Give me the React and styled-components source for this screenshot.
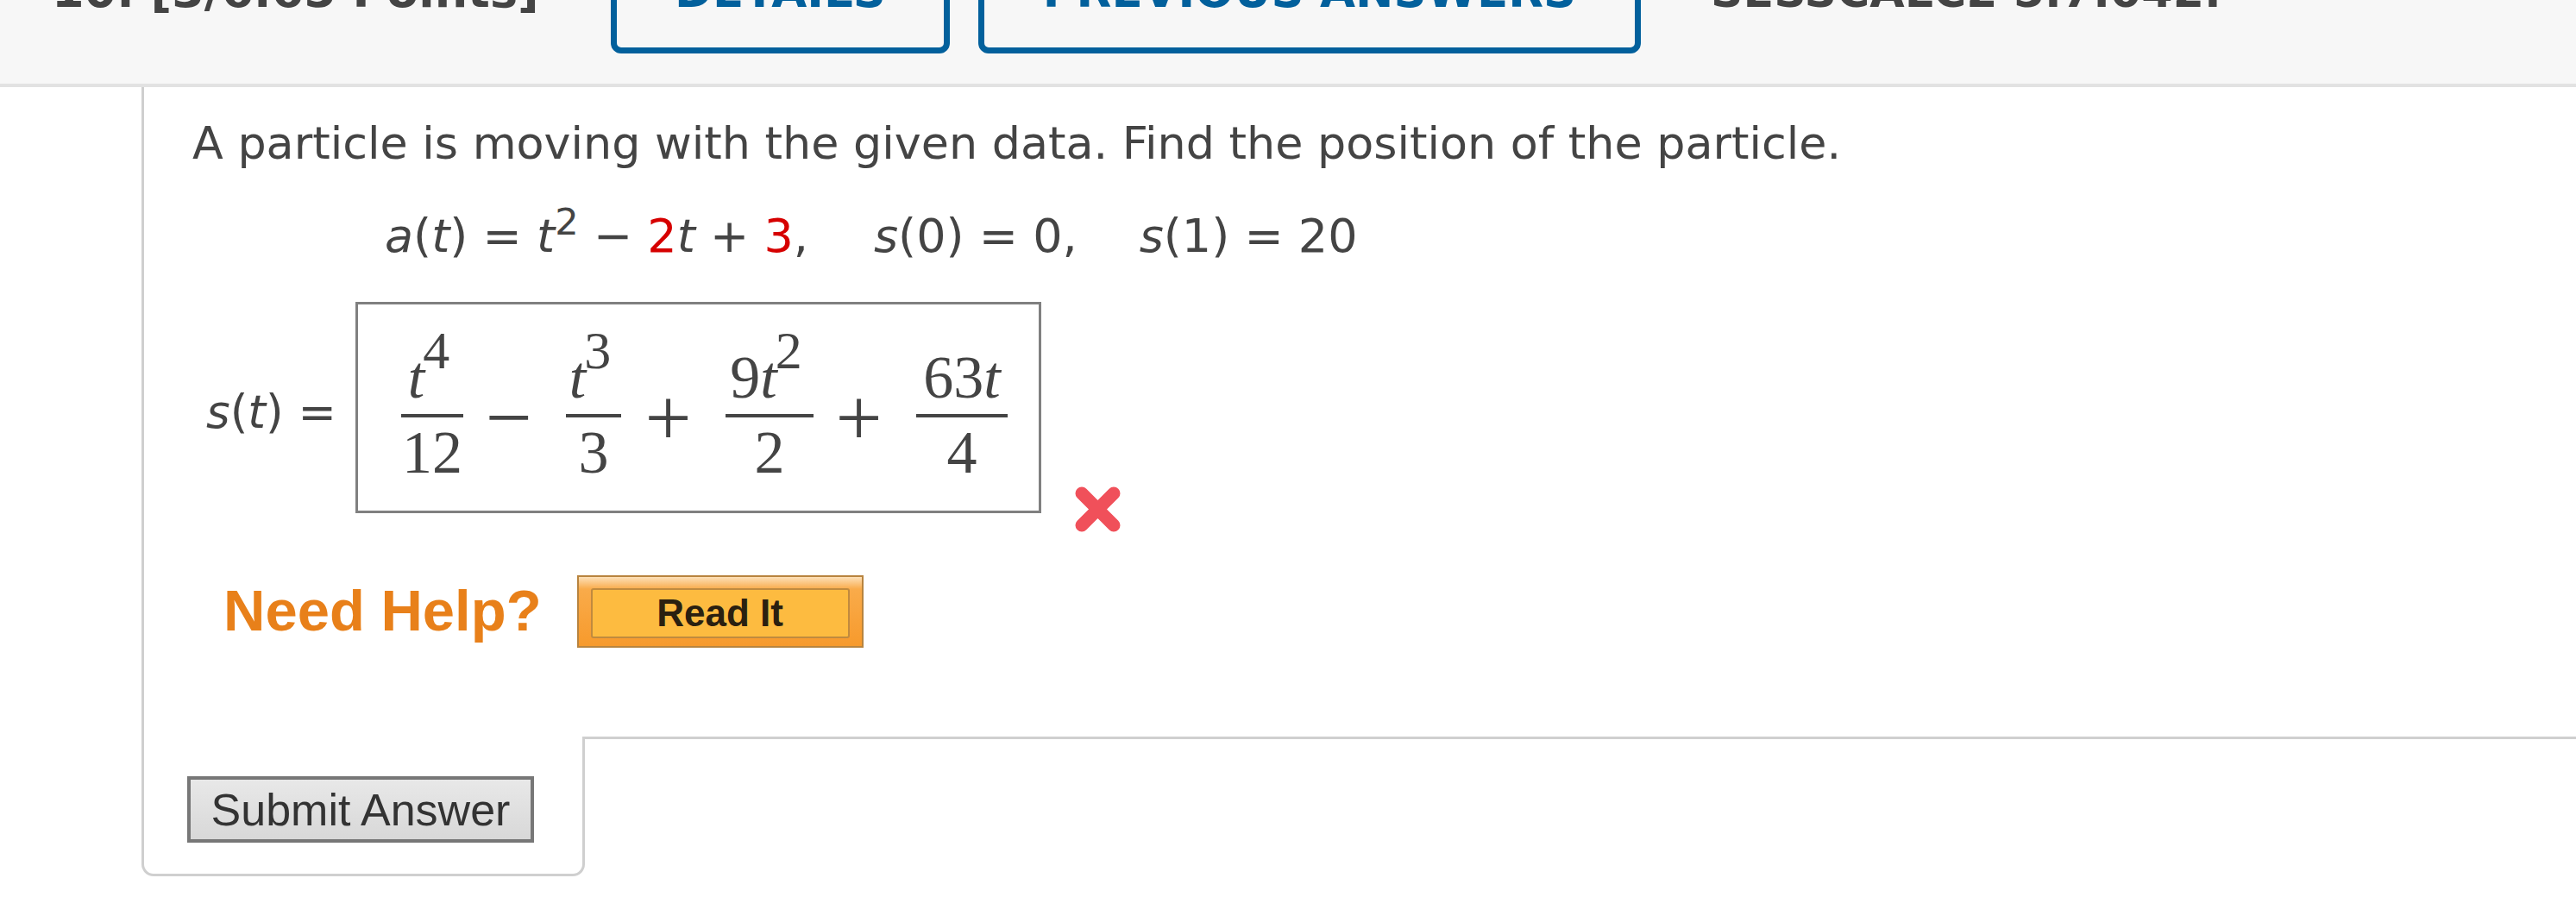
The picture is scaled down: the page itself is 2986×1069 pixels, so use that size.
import React from 'react';
import styled, { createGlobalStyle } from 'styled-components';

const GlobalStyle = createGlobalStyle`
  html, body {
    margin: 0;
    padding: 0;
    background: #fff;
  }
`;

const Page = styled.div`
  width: 2986px;
  height: 1069px;
  overflow: hidden;
  background: #fff;
  color: #444;
  font-family: "DejaVu Sans", sans-serif;
`;

const Header = styled.header`
  height: 97px;
  display: flex;
  align-items: flex-end;
  padding: 0 0 0 60px;
  background: #f7f7f7;
  border-bottom: 4px solid #e2e2e2;
  overflow: hidden;
`;

const HeaderRow = styled.div`
  display: flex;
  align-items: flex-end;
  margin-bottom: 35px;
`;

const Points = styled.span`
  width: ${({ $width }) => $width}px;
  font-weight: bold;
  font-size: ${({ $size }) => $size}px;
  line-height: 60px;
  color: #444;
  white-space: nowrap;
  margin-bottom: 42px;
`;

const Tab = styled.div`
  box-sizing: border-box;
  width: ${({ $width }) => $width}px;
  height: 120px;
  margin-right: ${({ $gap }) => $gap}px;
  border: 7px solid #02609c;
  border-radius: 12px;
  display: flex;
  justify-content: center;
  align-items: flex-end;
  padding-bottom: 40px;
  font-weight: bold;
  font-size: 53px;
  line-height: 50px;
  color: #02609c;
  white-space: nowrap;
`;

const Body = styled.section`
  box-sizing: border-box;
  height: 753px;
  margin-left: 164px;
  padding: 33px 0 0 56px;
  border-left: 3px solid #cfcfcf;
`;

const Prompt = styled.p`
  margin: 0;
  font-size: 52.3px;
  line-height: 64px;
  white-space: nowrap;
`;

const Equation = styled.div`
  display: flex;
  margin: 41px 0 0 223px;
  font-size: 54px;
  line-height: 70px;
  white-space: pre;
`;

const Term = styled.span`
  margin-right: ${({ $gap }) => $gap}px;
`;

const Italic = styled.i`
  font-style: italic;
`;

const Red = styled.span`
  color: #d60000;
`;

const Sup = styled.sup`
  font-size: 0.8em;
  line-height: 0;
  vertical-align: 20px;
`;

const AnswerRow = styled.div`
  display: flex;
  align-items: center;
  margin: 41px 0 0 16px;
`;

const AnswerLabel = styled.span`
  font-size: 53px;
  width: 173px;
  margin-top: 10px;
  white-space: pre;
`;

const AnswerBox = styled.div`
  box-sizing: border-box;
  width: 795px;
  height: 245px;
  padding: 31px 0 0 50px;
  display: flex;
  align-items: flex-start;
  border: 3px solid #808080;
  font-family: "Liberation Serif", serif;
  font-size: 70px;
  color: #444;
`;

const Fraction = styled.span`
  display: inline-flex;
  flex-direction: column;
  align-items: center;
  width: ${({ $width }) => $width}px;
  margin-right: ${({ $gap }) => $gap}px;
  line-height: 1;
`;

const Numerator = styled.span`
  box-sizing: border-box;
  display: block;
  width: 100%;
  height: 100px;
  padding-top: 19px;
  border-bottom: 4px solid #444;
  text-align: center;
  white-space: nowrap;
  i {
    font-style: italic;
  }
`;

const Denominator = styled.span`
  padding-top: 6px;
`;

const Power = styled.sup`
  font-size: 62px;
  line-height: 0;
  vertical-align: 34px;
  margin: 0 8px 0 -2px;
`;

const Operator = styled.span`
  display: flex;
  justify-content: center;
  width: ${({ $width }) => $width}px;
  margin-right: ${({ $gap }) => $gap}px;
  margin-top: 52px;
  font-size: 96px;
  line-height: 1;
`;

const WrongMark = styled.svg`
  width: 55px;
  height: 55px;
  margin: 0 0 -23px 38px;
  align-self: flex-end;
  flex: none;
`;

const HelpRow = styled.div`
  display: flex;
  align-items: center;
  margin: 72px 0 0 36px;
`;

const HelpLabel = styled.span`
  font-family: "Liberation Sans", Arial, sans-serif;
  font-weight: bold;
  font-size: 67px;
  color: #e8801a;
  margin: -4px 41px 0 0;
`;

const ReadIt = styled.button`
  box-sizing: border-box;
  width: 332px;
  height: 84px;
  padding: 0;
  border: 2px solid #b8843f;
  background: linear-gradient(#fde0b8 0, #f9ab4a 14px, #f79a2c 100%);
  display: flex;
  align-items: center;
  justify-content: center;
`;

const ReadItInner = styled.span`
  box-sizing: border-box;
  width: 300px;
  height: 58px;
  margin-top: 4px;
  border: 2px solid #c08a3e;
  border-radius: 3px;
  background: #fdbb40;
  font-family: "Liberation Sans", Arial, sans-serif;
  font-weight: bold;
  font-size: 44px;
  line-height: 54px;
  color: #2a2010;
  text-align: center;
`;

const Footer = styled.footer`
  display: flex;
  margin-left: 164px;
`;

const SubmitTab = styled.div`
  box-sizing: border-box;
  width: 514px;
  height: 162px;
  padding: 46px 0 0 50px;
  border: 3px solid #cfcfcf;
  border-top: none;
  border-radius: 0 0 14px 14px;
`;

const FooterRule = styled.div`
  flex: 1;
  margin-left: -3px;
  border-top: 3px solid #cfcfcf;
`;

const SubmitButton = styled.button`
  box-sizing: border-box;
  width: 402px;
  height: 77px;
  padding: 0;
  border: 4px solid #777;
  background: linear-gradient(#e8e8e8, #d8d8d8);
  font-family: "Liberation Sans", Arial, sans-serif;
  font-size: 52px;
  color: #333;
  white-space: nowrap;
`;

const fractions = [
  { num: <><i>t</i><Power>4</Power></>, den: '12', width: 72, gap: 28 },
  { num: <><i>t</i><Power>3</Power></>, den: '3', width: 64, gap: 30 },
  { num: <>9<i>t</i><Power>2</Power></>, den: '2', width: 102, gap: 28 },
  { num: <>63<i>t</i></>, den: '4', width: 106, gap: 0 },
];

const App = () => (
  <Page>
    <GlobalStyle />
    <Header>
      <HeaderRow>
        <Points $width={648} $size={54}>10. [3/6.65 Points]</Points>
        <Tab $width={393} $gap={33}>DETAILS</Tab>
        <Tab $width={768} $gap={81}>PREVIOUS ANSWERS</Tab>
        <Points $width={620} $size={52.2}>SESSCALC2 5.7.042.</Points>
      </HeaderRow>
    </Header>
    <Body>
      <Prompt>A particle is moving with the given data. Find the position of the particle.</Prompt>
      <Equation>
        <Term $gap={76}><Italic>a</Italic>(<Italic>t</Italic>) = <Italic>t</Italic><Sup>2</Sup> − <Red>2</Red><Italic>t</Italic> + <Red>3</Red>,</Term>
        <Term $gap={72}><Italic>s</Italic>(0) = 0,</Term>
        <Term $gap={0}><Italic>s</Italic>(1) = 20</Term>
      </Equation>
      <AnswerRow>
        <AnswerLabel><Italic>s</Italic>(<Italic>t</Italic>) =</AnswerLabel>
        <AnswerBox>
          {fractions.map((f, i) => (
            <React.Fragment key={f.den + i}>
              <Fraction $width={f.width} $gap={f.gap}>
                <Numerator>{f.num}</Numerator>
                <Denominator>{f.den}</Denominator>
              </Fraction>
              {i < 3 && <Operator $width={49} $gap={42}>{i === 0 ? '−' : '+'}</Operator>}
            </React.Fragment>
          ))}
        </AnswerBox>
        <WrongMark viewBox="0 0 55 55">
          <path d="M9 9 L46 46 M46 9 L9 46" stroke="#f0505a" strokeWidth="15" strokeLinecap="round" />
        </WrongMark>
      </AnswerRow>
      <HelpRow>
        <HelpLabel>Need Help?</HelpLabel>
        <ReadIt><ReadItInner>Read It</ReadItInner></ReadIt>
      </HelpRow>
    </Body>
    <Footer>
      <SubmitTab>
        <SubmitButton>Submit Answer</SubmitButton>
      </SubmitTab>
      <FooterRule />
    </Footer>
  </Page>
);

export default App;
